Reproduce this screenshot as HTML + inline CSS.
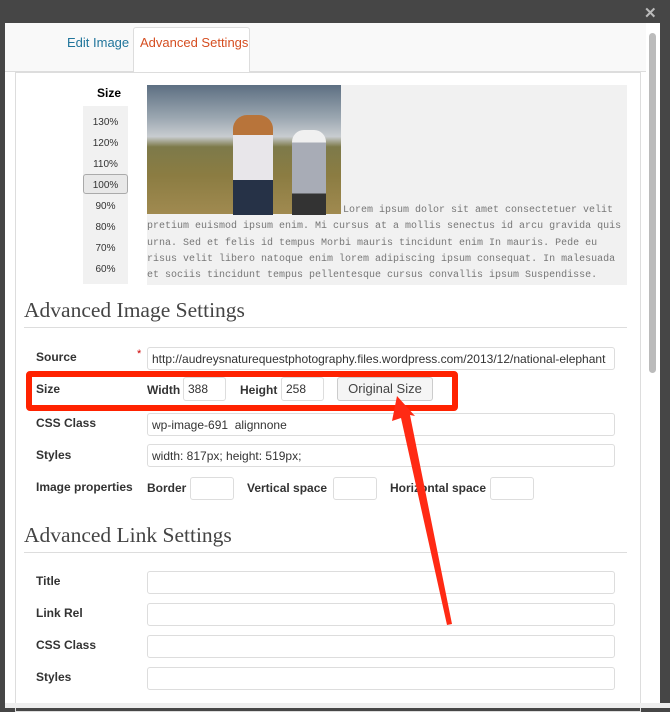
<!DOCTYPE html>
<html><head><meta charset="utf-8"><style>
*{margin:0;padding:0;box-sizing:border-box}
body{width:670px;height:708px;overflow:hidden;background:#464646;font-family:"Liberation Sans",sans-serif;position:relative}
.abs{position:absolute}
.lbl{position:absolute;font-size:12px;font-weight:bold;color:#333}
.inp{position:absolute;background:#fff;border:1px solid #ddd;border-radius:3px;font-size:12px;color:#333;padding:3px 4px;line-height:16px;white-space:nowrap;overflow:hidden}
h2{position:absolute;font-family:"Liberation Serif",serif;font-weight:normal;font-size:21.5px;color:#444;border-bottom:1px solid #ddd;left:24px;width:603px;padding-bottom:4px}
</style></head><body>
<div class="abs" style="left:5px;top:23px;width:655px;height:685px;background:#fff"></div>
<div class="abs" style="left:644px;top:4px;color:#bbb;font-size:15px;font-weight:bold">✕</div>
<div class="abs" style="left:5px;top:23px;width:641px;height:49px;background:#f9f9f9;border-bottom:1px solid #ddd"></div>
<div class="abs" style="left:67px;top:35px;font-size:13px;color:#21759b">Edit Image</div>
<div class="abs" style="left:133px;top:27px;width:117px;height:46px;background:#fff;border:1px solid #ddd;border-bottom:none;border-radius:3px 3px 0 0"></div>
<div class="abs" style="left:140px;top:35px;font-size:13px;color:#d54e21">Advanced Settings</div>
<div class="abs" style="left:649px;top:33px;width:7px;height:340px;background:#bbb;border-radius:4px"></div>
<div class="abs" style="left:15px;top:72px;width:626px;height:640px;border:1px solid #ddd"></div>
<div class="abs" style="left:97px;top:86px;font-size:12px;font-weight:bold">Size</div>
<div class="abs" style="left:83px;top:106px;width:45px;height:178px;background:#f1f1f1"></div>
<div class="abs" style="left:83px;top:174px;width:45px;height:20px;border:1px solid #aaa;border-radius:3px;background:#e8e8e8"></div>
<div class="abs" style="left:83px;top:112px;width:45px;font-size:10px;text-align:center;line-height:21px;color:#333">130%<br>120%<br>110%<br>100%<br>90%<br>80%<br>70%<br>60%</div>
<div class="abs" style="left:147px;top:85px;width:480px;height:200px;background:#f1f1f1"></div>
<div class="abs" style="left:147px;top:85px;width:194px;height:129px;background:linear-gradient(#5d6f82 0%,#9aa6b0 25%,#c8ccd0 40%,#7d7a4a 48%,#8b7c42 70%,#a08a50 100%)"></div>
<div class="abs" style="left:233px;top:115px;width:40px;height:100px;background:linear-gradient(#b8743a 0,#b8743a 20%,#e8e6ea 20%,#e8e6ea 65%,#263247 65%);border-radius:14px 14px 0 0"></div>
<div class="abs" style="left:292px;top:130px;width:34px;height:85px;background:linear-gradient(#f0f0f0 0,#f0f0f0 15%,#a8acb6 15%,#a8acb6 75%,#333 75%);border-radius:12px 12px 0 0"></div>
<div class="abs" style="left:147px;top:203px;width:480px;font-family:'Liberation Mono',monospace;font-size:10px;line-height:16.3px;color:#777;text-indent:196px">Lorem ipsum dolor sit amet consectetuer velit pretium euismod ipsum enim. Mi cursus at a mollis senectus id arcu gravida quis urna. Sed et felis id tempus Morbi mauris tincidunt enim In mauris. Pede eu risus velit libero natoque enim lorem adipiscing ipsum consequat. In malesuada et sociis tincidunt tempus pellentesque cursus convallis ipsum Suspendisse.</div>
<h2 style="top:298px">Advanced Image Settings</h2>
<div class="lbl" style="left:36px;top:350px">Source</div>
<div class="abs" style="left:137px;top:348px;color:#c00;font-size:11px">*</div>
<div class="inp" style="left:147px;top:347px;width:468px;height:23px">http://audreysnaturequestphotography.files.wordpress.com/2013/12/national-elephant</div>
<div class="lbl" style="left:36px;top:382px">Size</div>
<div class="lbl" style="left:147px;top:383px">Width</div>
<div class="inp" style="left:183px;top:377px;width:43px;height:24px">388</div>
<div class="lbl" style="left:240px;top:383px">Height</div>
<div class="inp" style="left:281px;top:377px;width:43px;height:24px">258</div>
<div class="abs" style="left:337px;top:377px;width:96px;height:24px;border:1px solid #ccc;border-radius:3px;background:#f5f5f5;font-size:13px;color:#444;text-align:center;line-height:22px">Original Size</div>
<div class="abs" style="left:26px;top:371px;width:432px;height:40px;border:6px solid #ff2200;border-radius:4px"></div>
<div class="lbl" style="left:36px;top:416px">CSS Class</div>
<div class="inp" style="left:147px;top:413px;width:468px;height:23px">wp-image-691 &nbsp;alignnone</div>
<div class="lbl" style="left:36px;top:448px">Styles</div>
<div class="inp" style="left:147px;top:444px;width:468px;height:23px">width: 817px; height: 519px;</div>
<div class="lbl" style="left:36px;top:480px">Image properties</div>
<div class="lbl" style="left:147px;top:481px">Border</div>
<div class="inp" style="left:190px;top:477px;width:44px;height:23px"></div>
<div class="lbl" style="left:247px;top:481px">Vertical space</div>
<div class="inp" style="left:333px;top:477px;width:44px;height:23px"></div>
<div class="lbl" style="left:390px;top:481px">Horizontal space</div>
<div class="inp" style="left:490px;top:477px;width:44px;height:23px"></div>
<h2 style="top:523px">Advanced Link Settings</h2>
<div class="lbl" style="left:36px;top:574px">Title</div>
<div class="inp" style="left:147px;top:571px;width:468px;height:23px"></div>
<div class="lbl" style="left:36px;top:606px">Link Rel</div>
<div class="inp" style="left:147px;top:603px;width:468px;height:23px"></div>
<div class="lbl" style="left:36px;top:638px">CSS Class</div>
<div class="inp" style="left:147px;top:635px;width:468px;height:23px"></div>
<div class="lbl" style="left:36px;top:670px">Styles</div>
<div class="inp" style="left:147px;top:667px;width:468px;height:23px"></div>
<div class="abs" style="left:5px;top:703px;width:665px;height:5px;background:#eee"></div>
<svg class="abs" style="left:0;top:0" width="670" height="708"><polygon points="397,396 392,421 401,418 447,625 452,624 410,415 415,416" fill="#ff2a14"/></svg>
</body></html>
